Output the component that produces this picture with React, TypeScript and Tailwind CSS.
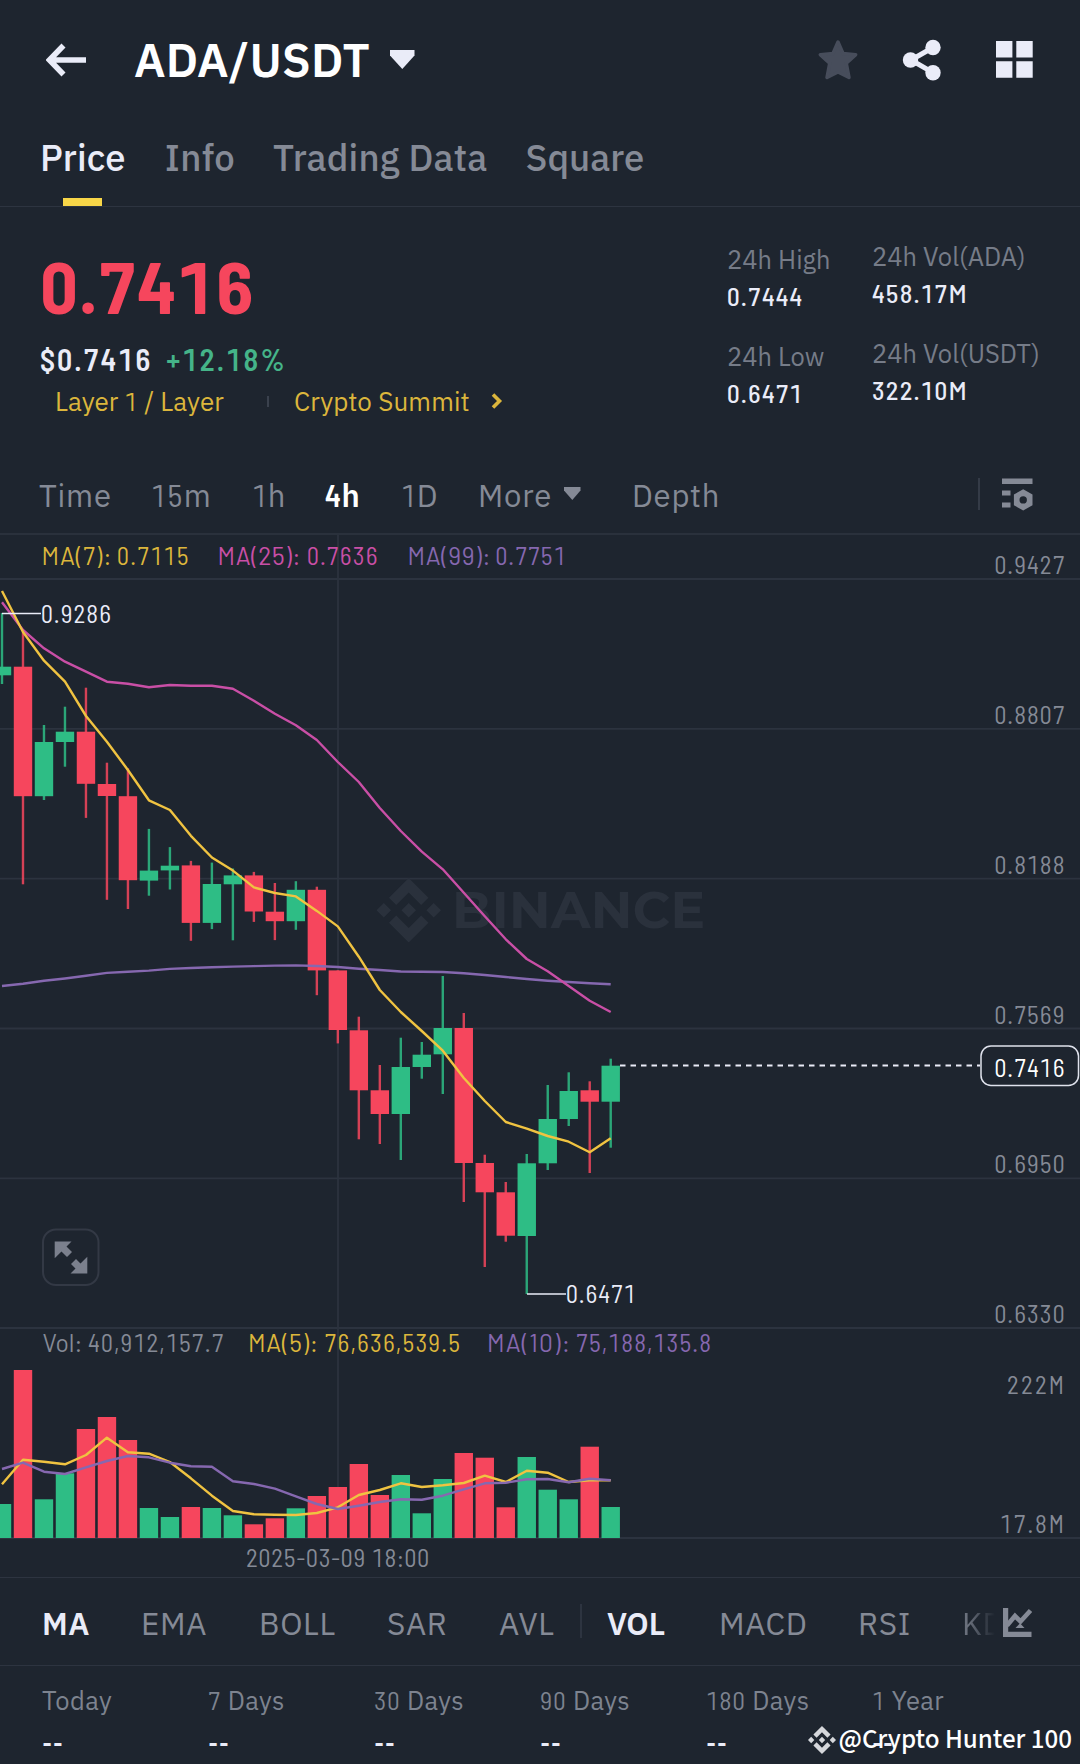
import { Fragment } from "react";

const LABEL = "font-['IBM_Plex_Sans',Roboto,sans-serif]";
const NUM = "font-['Barlow_Semi_Condensed',Barlow,Roboto,sans-serif] tabular-nums";
const WIDE = "font-[Barlow,Roboto,sans-serif]";

const GREEN = "#2ebd85";
const RED = "#f6465d";
const YELLOW = "#f0c341";
const PINK = "#c94fa6";
const PURPLE = "#8668b0";
const GRAY = "#858a96";

const VOLUME_BASE = 1538;

// [rising, high, body top, body bottom, low, volume top]
const candles: [boolean, number, number, number, number, number][] = [
  [true, 613, 666.7, 675.3, 684, 1504],
  [false, 631, 666.7, 796.2, 884.3, 1370],
  [true, 725, 742, 796.2, 800, 1499.3],
  [true, 706.7, 731.7, 742, 766.7, 1473.3],
  [false, 687.7, 731.7, 783.8, 817.9, 1429],
  [false, 762.7, 784, 796, 899.8, 1417],
  [false, 768.3, 796.2, 880.2, 909, 1440],
  [true, 828.9, 870.6, 880.6, 895.7, 1508],
  [true, 847.1, 865.7, 870.4, 889.5, 1517],
  [false, 860.9, 865.4, 922.9, 940.8, 1507],
  [true, 862.6, 884, 922.9, 929.1, 1508],
  [true, 868.5, 875.4, 884.3, 940.3, 1515.3],
  [false, 871.9, 875.4, 911.5, 921.9, 1524.3],
  [false, 883, 911.7, 921.2, 940.1, 1518.3],
  [true, 881.2, 889.8, 921.2, 929.8, 1508.3],
  [false, 886.7, 889.8, 970.4, 995.2, 1496],
  [false, 970.4, 970.4, 1030, 1043.4, 1487],
  [false, 1016.7, 1030.3, 1090.3, 1139.3, 1464],
  [false, 1065, 1090.3, 1114, 1144, 1495],
  [true, 1037.7, 1067, 1114, 1160, 1475],
  [true, 1042, 1054.7, 1067, 1078.7, 1513.3],
  [true, 976, 1028, 1054.3, 1094, 1479],
  [false, 1013, 1028, 1163, 1202, 1453],
  [false, 1154.7, 1163, 1192.3, 1267, 1457.7],
  [false, 1182, 1192.3, 1235.7, 1241.7, 1507.3],
  [true, 1154, 1163.3, 1236, 1294, 1457],
  [true, 1085, 1119, 1163.3, 1170, 1489.7],
  [true, 1072.3, 1091, 1119, 1126, 1499.3],
  [false, 1081.3, 1090.3, 1101.7, 1173, 1446.7],
  [true, 1058.7, 1065.7, 1101.7, 1147.7, 1507],
];

const ma7 = [591, 632, 660.7, 681.7, 716, 741.7, 770, 800.3, 810, 835.8, 857.5, 870.6, 887.4, 893, 896.4, 910.9, 926.4, 956.7, 990, 1012, 1031, 1050.7, 1078, 1101, 1122, 1128.7, 1136, 1141.7, 1152.3, 1138.3];
const ma25 = [602.3, 630, 648.3, 661.7, 671.7, 681.7, 683.7, 687.3, 685, 685.7, 685.7, 688.7, 700.7, 713.7, 725.2, 740, 762, 782, 808, 831, 851.7, 869.3, 892.7, 916.3, 939.3, 959, 971.3, 986, 1000.7, 1012];
const ma99 = [986, 983.7, 980.8, 978.5, 975.8, 972.9, 971.8, 970.6, 968.9, 968, 967.3, 966.6, 966.1, 965.6, 965.4, 966, 967, 968.7, 970, 971.5, 971.8, 972, 973.3, 975, 977, 979, 980.7, 982, 983.3, 984.3];
const vol5 = [1484.3, 1459.7, 1461.7, 1464.3, 1455, 1437.7, 1452.3, 1453.7, 1462, 1478.3, 1495.7, 1511, 1514.3, 1514.7, 1515, 1513, 1507.3, 1495, 1490, 1483.3, 1487, 1485.3, 1483, 1475.7, 1482, 1470.7, 1472.7, 1482, 1480.3, 1480.3];
const vol10 = [1469, 1462.7, 1471.7, 1474, 1467.3, 1461, 1456, 1457.3, 1462.7, 1466.3, 1466.7, 1481.3, 1484, 1488.7, 1496.3, 1504, 1509, 1505.7, 1502, 1499.3, 1499.7, 1495.7, 1489.3, 1483.3, 1482.7, 1479.3, 1479, 1482.3, 1478.7, 1480.3];

const cx = (i: number) => 2 + i * 20.99;
const points = (ys: number[]) => ys.map((y, i) => `${cx(i).toFixed(1)},${y}`).join(" ");

const priceGrid: [number, string][] = [
  [579, "0.9427"],
  [728.8, "0.8807"],
  [878.7, "0.8188"],
  [1028.5, "0.7569"],
  [1178.3, "0.6950"],
  [1328, "0.6330"],
];

function BinanceMark({ className }: { className?: string }) {
  return (
    <svg viewBox="0 0 24 24" className={className} fill="currentColor">
      <path d="M16.624 13.92l2.718 2.716-7.353 7.353-7.353-7.352 2.717-2.717 4.636 4.66 4.635-4.66zm4.637-4.636L24 12l-2.715 2.716L18.568 12l2.693-2.716zm-9.272 0l2.716 2.692-2.717 2.717L9.272 12l2.716-2.715zm-9.273 0L5.41 12l-2.692 2.692L0 12l2.716-2.716zM11.989.012l7.353 7.329-2.718 2.715-4.635-4.636-4.636 4.66-2.717-2.716z" />
    </svg>
  );
}

function ChartText({ x, y, w, fill, children }: { x: number; y: number; w: number; fill: string; children: string }) {
  return (
    <text x={x} y={y} fill={fill} textLength={w} className={`${NUM} text-[24.500px]`}>
      {children}
    </text>
  );
}

type LegendProps = { x: number; y: number; labelWidth: number; valueX: number; valueWidth: number; fill: string; label: string; value: string };

function Legend({ x, y, labelWidth, valueX, valueWidth, fill, label, value }: LegendProps) {
  return (
    <g fill={fill} className="text-[24.500px]">
      <text x={x} y={y} textLength={labelWidth} className={WIDE}>{label}</text>
      <text x={valueX} y={y} textLength={valueWidth} className={NUM}>{value}</text>
    </g>
  );
}

function Header() {
  return (
    <header className="flex h-[119px] items-center pl-[46px] pr-[47px]">
      <svg className="h-[40px] w-[41px]" viewBox="0 0 41 40" fill="none" stroke="#eaecf8" strokeWidth="5.6">
        <path d="M40 20H4M17.5 5.5L3.5 20l14 14.500" />
      </svg>
      <h1 className={`${LABEL} ml-[47px] text-[47px] font-semibold leading-[60px] tracking-[0.2px] text-white`}>ADA/USDT</h1>
      <svg className="ml-[20px] h-[19px] w-[25px]" viewBox="0 0 25 19" fill="#eaecf8">
        <path d="M0 0h24.500v5.500L12.300 19 0 5.500z" />
      </svg>
      <svg className="ml-auto h-[42px] w-[42px]" viewBox="0 0 42 42" fill="#474d5b" stroke="#474d5b" strokeWidth="3.500" strokeLinejoin="round">
        <path d="M21 3l5 11.500 12.700 1.200-9.400 8.600 2.700 14.200L21 33l-11 5.500 2.700-14.200-9.400-8.600L16 14.500z" />
      </svg>
      <svg className="ml-[43px] h-[42px] w-[40px]" viewBox="0 0 40 42" fill="#eaecf8" stroke="#eaecf8">
        <path d="M31 8.500L9 21l22 12.700" fill="none" strokeWidth="5" />
        <circle cx="8.500" cy="21" r="7.700" stroke="none" />
        <circle cx="31" cy="8.500" r="7.700" stroke="none" />
        <circle cx="31" cy="33.700" r="7.700" stroke="none" />
      </svg>
      <svg className="ml-[54px] h-[37px] w-[37px]" viewBox="0 0 37 37" fill="#eaecf8">
        <path d="M0 0h16.400v16.400H0zM20.300 0h16.400v16.400H20.300zM0 20.300h16.400v16.400H0zM20.300 20.300h16.400v16.400H20.300z" />
      </svg>
    </header>
  );
}

function Tabs() {
  return (
    <nav className={`${LABEL} flex h-[88px] gap-[39px] border-b border-[#2d3440] pl-[40px] text-[36.5px] font-medium leading-[77px] text-[#858a96]`}>
      <div className="relative tracking-[0.2px] text-[#eaecf8]">
        Price
        <span className="absolute bottom-0 left-[23px] h-[8px] w-[39px] bg-[#f8d648]" />
      </div>
      <div className="tracking-[0.3px]">Info</div>
      <div className="-ml-px tracking-[0.2px]">Trading Data</div>
      <div className="-ml-px">Square</div>
    </nav>
  );
}

function Stat({ label, value, unit }: { label: string; value: string; unit?: string }) {
  return (
    <div>
      <div className={`${LABEL} text-[25.5px] leading-[36px] text-[#767c88]`}>{label}</div>
      <div className={`${NUM} text-[25.500px] font-medium leading-[36px] tracking-[1.200px] text-[#eaecf8]`}>
        {value}
        {unit && <span className={WIDE}>{unit}</span>}
      </div>
    </div>
  );
}

function PriceSummary() {
  return (
    <section className="flex h-[250px]">
      <div className="w-[727px] pl-[40px] pt-[41px]">
        <div className={`${NUM} text-[73px] font-bold leading-[74px] tracking-[1.100px] text-[#f6465d]`}>0.7416</div>
        <div className={`${NUM} mt-[19px] flex gap-[14px] text-[30px] font-semibold leading-[36px] tracking-[2px]`}>
          <span className="text-[#eaecf8]">$0.7416</span>
          <span className="text-[#45b489]">+12.18%</span>
        </div>
        <div className={`${LABEL} mt-[8px] flex items-center text-[26px] leading-[32px] text-[#dcb63c]`}>
          <span className="ml-[15px] w-[212px]">Layer <span className={`${NUM} tracking-[1px]`}>1</span> / Layer</span>
          <span className="h-[11px] w-[2px] bg-[#3a414d]" />
          <span className="ml-[25px] tracking-[0.1px]">Crypto Summit</span>
          <svg className="ml-[21px] h-[16px] w-[12px]" viewBox="0 0 12 16" fill="none" stroke="#dcb63c" strokeWidth="3.600">
            <path d="M2 1.500L8.500 8 2 14.500" />
          </svg>
        </div>
      </div>
      <div className="flex w-[145px] flex-col gap-[25px] pt-[35px]">
        <Stat label="24h High" value="0.7444" />
        <Stat label="24h Low" value="0.6471" />
      </div>
      <div className="flex flex-col gap-[25px] pt-[32px]">
        <Stat label="24h Vol(ADA)" value="458.17" unit="M" />
        <Stat label="24h Vol(USDT)" value="322.10" unit="M" />
      </div>
    </section>
  );
}

function Intervals() {
  return (
    <div className={`${LABEL} flex h-[78px] items-center border-b-2 border-[#2a313c] pl-[39px] pt-[1px] text-[31px] leading-[40px] tracking-[0.8px] text-[#858a96]`}>
      <span className="w-[112px]">Time</span>
      <span className="w-[101px]"><span className={`${NUM} tracking-[1.500px]`}>15</span>m</span>
      <span className="w-[73px]"><span className={NUM}>1</span>h</span>
      <span className="w-[76px] font-semibold text-white"><span className={NUM}>4</span>h</span>
      <span className="w-[77px]"><span className={NUM}>1</span>D</span>
      <span className="w-[86px]">More</span>
      <svg className="-mt-[5px] h-[13px] w-[17px]" viewBox="0 0 17 13" fill="#858a96">
        <path d="M0 0h16.500v3.500L8.300 13 0 3.500z" />
      </svg>
      <span className="ml-[51px]">Depth</span>
      <span className="-mt-[3px] ml-auto h-[32px] w-[2px] bg-[#343b47]" />
      <svg className="-mt-[3px] ml-[22px] mr-[47px] h-[33px] w-[31px]" viewBox="0 0 31 33" fill="#858a96">
        <path d="M0 .5h30.500v5.500H0zM0 12.500h8.500v5H0zM0 24.500h8.500v5H0z" />
        <path fillRule="evenodd" d="M21.200 11.300l9.300 5.200v10.700l-9.300 5.300-9.300-5.300V16.500zM21.200 18.200a3.700 3.700 0 100 7.400 3.700 3.700 0 000-7.400z" />
      </svg>
    </div>
  );
}

function Chart() {
  return (
    <svg className="block h-[1042px] w-[1080px]" viewBox="0 535 1080 1042">
      <g stroke="#2c333f" strokeWidth="1.800">
        {priceGrid.map(([y]) => (
          <line key={y} x1="0" x2="1080" y1={y} y2={y} />
        ))}
        <line x1="0" x2="1080" y1={VOLUME_BASE} y2={VOLUME_BASE} />
        <line x1="338" x2="338" y1="535" y2={VOLUME_BASE} />
      </g>

      <g className="text-[#2a313c]">
        <svg x="376.500" y="878" width="64.500" height="64.500" viewBox="0 0 24 24">
          <BinanceMark />
        </svg>
        <text x="452" y="928" fill="currentColor" textLength="253" className="font-[Montserrat,Lato,sans-serif] text-[51.500px] font-bold">
          BINANCE
        </text>
      </g>

      {candles.map(([up, high, top, bottom, low, vol], i) => {
        const color = up ? GREEN : RED;
        const x = cx(i);
        return (
          <Fragment key={i}>
            <rect x={x - 1.2} y={high} width="2.400" height={low - high} fill={color} opacity="0.85" />
            <rect x={x - 9.2} y={top} width="18.400" height={bottom - top} fill={color} />
            <rect x={x - 9.2} y={vol} width="18.400" height={VOLUME_BASE - vol} fill={color} />
          </Fragment>
        );
      })}

      <g fill="none" strokeWidth="2.400" strokeLinejoin="round">
        <polyline points={points(ma99)} stroke={PURPLE} />
        <polyline points={points(ma25)} stroke={PINK} />
        <polyline points={points(ma7)} stroke={YELLOW} />
        <polyline points={points(vol5)} stroke={YELLOW} />
        <polyline points={points(vol10)} stroke={PURPLE} />
      </g>

      <g stroke="#eaecf8" strokeWidth="1.500">
        <line x1="2" x2="41" y1="613.500" y2="613.500" />
        <line x1="527" x2="566" y1="1294" y2="1294" />
        <line x1="620" x2="980" y1="1065.500" y2="1065.500" strokeWidth="1.800" strokeDasharray="5.500 5" />
      </g>
      <rect x="981" y="1046" width="97.500" height="39.500" rx="10" fill="#1e252f" stroke="#dfe2ec" strokeWidth="1.500" />

      <Legend x={41.500} y={565} labelWidth={70} valueX={117} valueWidth={71.500} fill="#dcb63c" label="MA(7):" value="0.7115" />
      <Legend x={217.500} y={565} labelWidth={83} valueX={307} valueWidth={70.500} fill={PINK} label="MA(25):" value="0.7636" />
      <Legend x={407.500} y={565} labelWidth={83} valueX={495.500} valueWidth={70} fill={PURPLE} label="MA(99):" value="0.7751" />
      <ChartText x={41} y={622.500} w={70} fill="#eaecf8">0.9286</ChartText>
      <ChartText x={566} y={1302.700} w={69.500} fill="#eaecf8">0.6471</ChartText>
      {priceGrid.map(([y, label]) => (
        <ChartText key={label} x={994.500} y={y - 5} w={70} fill={GRAY}>{label}</ChartText>
      ))}
      <ChartText x={994.500} y={1077} w={70} fill="#ffffff">0.7416</ChartText>
      <ChartText x={1007} y={1394} w={57} fill={GRAY}>222M</ChartText>
      <ChartText x={1000} y={1533} w={64} fill={GRAY}>17.8M</ChartText>
      <Legend x={42.500} y={1352} labelWidth={40} valueX={88} valueWidth={135.500} fill={GRAY} label="Vol:" value="40,912,157.7" />
      <Legend x={248} y={1352} labelWidth={70} valueX={324.500} valueWidth={135.500} fill="#dcb63c" label="MA(5):" value="76,636,539.5" />
      <Legend x={487} y={1352} labelWidth={83} valueX={576} valueWidth={135} fill={PURPLE} label="MA(10):" value="75,188,135.8" />
      <ChartText x={246} y={1567} w={183} fill={GRAY}>2025-03-09 18:00</ChartText>

      <rect x="43" y="1229.500" width="55.500" height="55.500" rx="13" fill="#1e252f" stroke="#333945" strokeWidth="2" />
      <path
        d="M54.700 1241.500H71.500l-5 5 5.500 5.500-5 5-5.500-5.500-6.800 6.800zM87.300 1273.500H70.500l5-5-4.500-4.500 5-5 4.500 4.500 6.800-6.800z"
        fill="#7b808d"
      />
    </svg>
  );
}

function IndicatorBar() {
  return (
    <div className={`${LABEL} flex h-[89px] items-center overflow-hidden border-y border-[#2d3440] pl-[41px] pt-[5px] text-[31.5px] leading-[42px] tracking-[0.6px] text-[#858a96]`}>
      <span className="ml-px w-[99px] font-semibold text-[#eaecf8]">MA</span>
      <span className="w-[118px]">EMA</span>
      <span className="w-[128px]">BOLL</span>
      <span className="w-[112px]">SAR</span>
      <span className="w-[81px]">AVL</span>
      <span className="-mt-[6px] h-[34px] w-[2px] bg-[#2d3440]" />
      <span className="ml-[25px] w-[112px] font-semibold tracking-normal text-[#eaecf8]">VOL</span>
      <span className="w-[139px]">MACD</span>
      <span className="w-[104px]">RSI</span>
      <span className="w-[33px] overflow-hidden bg-gradient-to-r from-[#6a707c] from-20% to-[#1e252f] bg-clip-text text-transparent">KDJ</span>
      <svg className="-mt-[4px] ml-[8px] h-[29px] w-[29px] shrink-0" viewBox="0 0 29 29" fill="none" stroke="#858a96">
        <path d="M2.600 0v26.300H28.500" strokeWidth="5.200" />
        <path d="M4 17.500l8-9.500 5.500 5.500L27.500 2.500" strokeWidth="4.600" />
        <path d="M12.500 20h9L17 15.200z" fill="#858a96" stroke="none" />
      </svg>
    </div>
  );
}

const periods: [string, string][] = [
  ["", "Today"],
  ["7", " Days"],
  ["30", " Days"],
  ["90", " Days"],
  ["180", " Days"],
  ["1", " Year"],
];

function Performance() {
  return (
    <section className="relative h-[98px] pl-[42px] pt-[16px]">
      <div className={`${LABEL} flex text-[25.5px] leading-[36px] tracking-[0.4px] text-[#7d838f]`}>
        {periods.map(([n, unit]) => (
          <div key={n} className="w-[166px]">
            <div className="whitespace-pre"><span className={`${NUM} tracking-[1px]`}>{n}</span>{unit}</div>
            <div className="mt-[7px] font-medium text-[#eaecf8]">--</div>
          </div>
        ))}
      </div>
      <div className="absolute right-[8px] top-[56px] flex items-center gap-[3px] font-['Source_Sans_3','Noto_Sans_CJK_SC',sans-serif] text-[27.200px] font-medium leading-[36px] text-white">
        <BinanceMark className="h-[28px] w-[28px] text-[#d5d7db]" />
        @Crypto Hunter 100
      </div>
    </section>
  );
}

export default function App() {
  return (
    <main className="h-[1764px] w-[1080px] overflow-hidden bg-[#1e252f]">
      <Header />
      <Tabs />
      <PriceSummary />
      <Intervals />
      <Chart />
      <IndicatorBar />
      <Performance />
    </main>
  );
}
